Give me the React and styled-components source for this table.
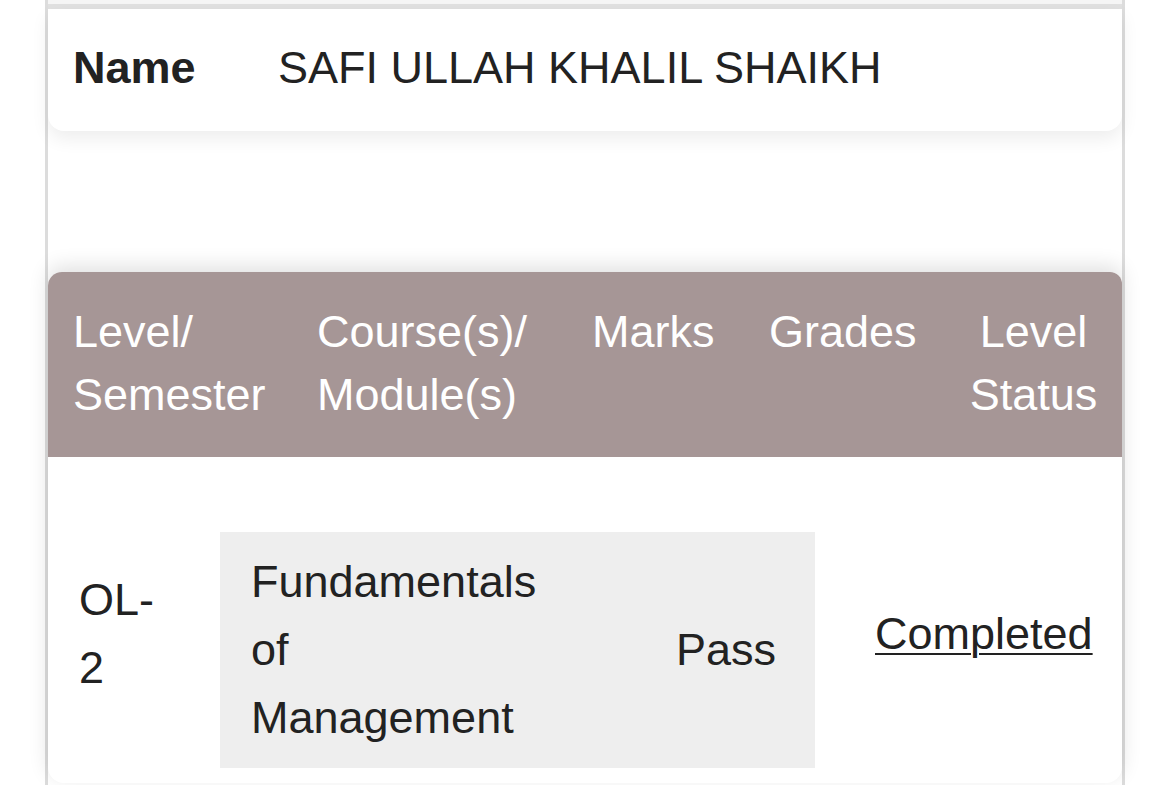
import React from 'react';
import styled, { createGlobalStyle } from 'styled-components';

const GlobalStyle = createGlobalStyle`
	html, body {
		margin: 0;
		padding: 0;
		background: #ffffff;
	}

	body {
		font-family: 'Liberation Sans', Arial, sans-serif;
		color: #222222;
		overflow: hidden;
	}
`;

const HEADERS = [
	{ label: ['Level/', 'Semester'], align: 'left' },
	{ label: ['Course(s)/', 'Module(s)'], align: 'left' },
	{ label: ['Marks'], align: 'left' },
	{ label: ['Grades'], align: 'left' },
	{ label: ['Level', 'Status'], align: 'center' },
];

export default function App() {
	return (
		<>
			<GlobalStyle />
			<Frame>
				<TopStrip />

				<NameCard>
					<NameLabel>Name</NameLabel>
					<NameValue>SAFI ULLAH KHALIL SHAIKH</NameValue>
				</NameCard>

				<ResultCard>
					<HeaderRow>
						{HEADERS.map((header, index) => (
							<HeaderCell key={`${index}-${header.label[0]}`} $align={header.align}>
								{header.label.map((line) => (
									<span key={line}>{line}</span>
								))}
							</HeaderCell>
						))}
					</HeaderRow>

					<BodyRow>
						<LevelCell>
							OL-
							<br />2
						</LevelCell>

						<CourseBox>
							<CourseName>Fundamentals of Management</CourseName>
							<Grade>Pass</Grade>
						</CourseBox>

						<StatusCell>
							<StatusLink href='#'>Completed</StatusLink>
						</StatusCell>
					</BodyRow>
				</ResultCard>
			</Frame>
		</>
	);
}

const Frame = styled.div`
	margin-left: 45px;
	width: 1074px;
	min-height: 785px;
	border-left: 3px solid #dcdcdc;
	border-right: 3px solid #dcdcdc;
	display: flex;
	flex-direction: column;
`;

const TopStrip = styled.div`
	height: 4px;
	background: #f5f5f5;
	border-bottom: 5px solid #e0e0e0;
`;

const NameCard = styled.div`
	height: 122px;
	box-sizing: border-box;
	display: flex;
	align-items: center;
	padding: 0 0 4px 25px;
	background: #ffffff;
	border-radius: 0 0 16px 16px;
	box-shadow: 0 8px 18px rgba(0, 0, 0, 0.07);
	font-size: 45px;
`;

const NameLabel = styled.div`
	width: 205px;
	font-weight: 700;
`;

const NameValue = styled.div`
	font-weight: 400;
`;

const ResultCard = styled.div`
	margin-top: 141px;
	border-radius: 14px 12px 16px 16px;
	box-shadow: 0 -6px 20px rgba(0, 0, 0, 0.12);
	background: #ffffff;
	overflow: hidden;
`;

const HeaderRow = styled.div`
	display: grid;
	grid-template-columns: 244px 275px 177px 201px 177px;
	height: 185px;
	background: #a69696;
	color: #ffffff;
	font-size: 45px;
	line-height: 63px;
`;

const HeaderCell = styled.div`
	display: flex;
	flex-direction: column;
	align-items: ${({ $align }) => ($align === 'center' ? 'center' : 'flex-start')};
	padding: 28px 0 0 ${({ $align }) => ($align === 'center' ? '0' : '25px')};
`;

const BodyRow = styled.div`
	display: flex;
	align-items: center;
	padding: 75px 0 15px;
	font-size: 45px;
	line-height: 68px;
`;

const LevelCell = styled.div`
	width: 172px;
	box-sizing: border-box;
	padding: 0 0 32px 31px;
`;

const CourseBox = styled.div`
	width: 595px;
	height: 236px;
	box-sizing: border-box;
	padding: 16px 39px 16px 31px;
	background: #eeeeee;
	display: flex;
	align-items: center;
	justify-content: space-between;
`;

const CourseName = styled.div`
	width: 300px;
`;

const Grade = styled.div`
	text-align: right;
`;

const StatusCell = styled.div`
	flex: 1;
	padding: 0 0 32px 60px;
`;

const StatusLink = styled.a`
	color: #222222;
	text-decoration: underline;
	text-underline-offset: 4px;
	text-decoration-thickness: 2px;
`;
